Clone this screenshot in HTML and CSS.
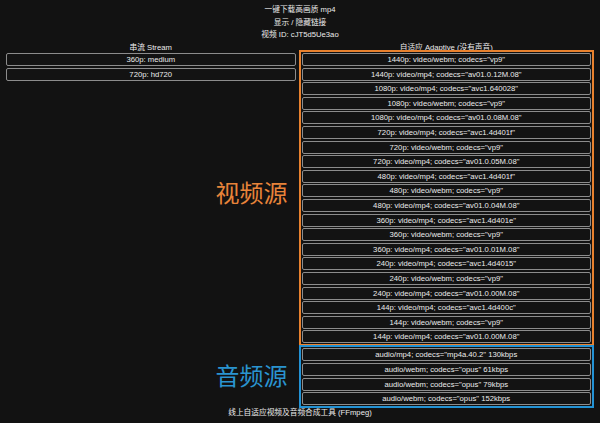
FILE: index.html
```html
<!DOCTYPE html>
<html lang="zh">
<head>
<meta charset="utf-8">
<title>一键下载高画质 mp4</title>
<link rel="stylesheet" href="styles.css">
</head>
<body>
<div class="top">
  <div class="line">一键下载高画质 mp4</div>
  <div class="line">显示 / 隐藏链接</div>
  <div class="line">视频 ID: cJT5d5Ue3ao</div>
</div>
<div class="cols">
  <div class="col">
    <div class="head">串流 Stream</div>
    <div class="btn">360p: medium</div>
    <div class="btn">720p: hd720</div>
  </div>
  <div class="col">
    <div class="head">自适应 Adaptive (没有声音)</div>
    <div class="group video">
      <div class="btn">1440p: video/webm; codecs="vp9"</div>
      <div class="btn">1440p: video/mp4; codecs="av01.0.12M.08"</div>
      <div class="btn">1080p: video/mp4; codecs="avc1.640028"</div>
      <div class="btn">1080p: video/webm; codecs="vp9"</div>
      <div class="btn">1080p: video/mp4; codecs="av01.0.08M.08"</div>
      <div class="btn">720p: video/mp4; codecs="avc1.4d401f"</div>
      <div class="btn">720p: video/webm; codecs="vp9"</div>
      <div class="btn">720p: video/mp4; codecs="av01.0.05M.08"</div>
      <div class="btn">480p: video/mp4; codecs="avc1.4d401f"</div>
      <div class="btn">480p: video/webm; codecs="vp9"</div>
      <div class="btn">480p: video/mp4; codecs="av01.0.04M.08"</div>
      <div class="btn">360p: video/mp4; codecs="avc1.4d401e"</div>
      <div class="btn">360p: video/webm; codecs="vp9"</div>
      <div class="btn">360p: video/mp4; codecs="av01.0.01M.08"</div>
      <div class="btn">240p: video/mp4; codecs="avc1.4d4015"</div>
      <div class="btn">240p: video/webm; codecs="vp9"</div>
      <div class="btn">240p: video/mp4; codecs="av01.0.00M.08"</div>
      <div class="btn">144p: video/mp4; codecs="avc1.4d400c"</div>
      <div class="btn">144p: video/webm; codecs="vp9"</div>
      <div class="btn">144p: video/mp4; codecs="av01.0.00M.08"</div>
      <div class="label label-video">视频源</div>
    </div>
    <div class="group audio">
      <div class="btn">audio/mp4; codecs="mp4a.40.2" 130kbps</div>
      <div class="btn">audio/webm; codecs="opus" 61kbps</div>
      <div class="btn">audio/webm; codecs="opus" 79kbps</div>
      <div class="btn">audio/webm; codecs="opus" 152kbps</div>
      <div class="label label-audio">音频源</div>
    </div>
  </div>
</div>
<div class="foot">线上自适应视频及音频合成工具 (FFmpeg)</div>
</body>
</html>
```
FILE: styles.css
```css
html, body {
  margin: 0;
  padding: 0;
  background: #121212;
  color: #ececec;
  font-family: "Liberation Sans", "Noto Sans CJK SC", sans-serif;
  font-size: 7.7px;
}
body {
  width: 600px;
  height: 423px;
  overflow: hidden;
}
.top {
  padding-top: 4px;
  text-align: center;
}
.line {
  line-height: 12.5px;
}
.cols {
  display: grid;
  grid-template-columns: 1fr 1fr;
  column-gap: 6px;
  padding: 0 9px 0 6px;
}
.col {
  display: flex;
  flex-direction: column;
  gap: 1.6px;
}
.head {
  text-align: center;
  line-height: 11px;
  margin-bottom: -1px;
}
.group {
  position: relative;
  display: flex;
  flex-direction: column;
  gap: 1.6px;
}
.group.video {
  outline: 2px solid #e8812e;
  outline-offset: 1.5px;
}
.group.audio {
  margin-top: 3.5px;
  outline: 2px solid #2392d4;
  outline-offset: 1.5px;
}
.btn {
  height: 11px;
  line-height: 11px;
  border: 1px solid #8c8c8c;
  border-radius: 2px;
  background: #131313;
  text-align: center;
  white-space: nowrap;
}
.label {
  position: absolute;
  left: -86px;
  font-family: "Noto Sans CJK SC", sans-serif;
  font-size: 24px;
  line-height: 28px;
  white-space: nowrap;
}
.label-video {
  top: 125px;
  color: #e8843a;
}
.label-audio {
  top: 13px;
  color: #2a94d0;
}
.foot {
  text-align: center;
  line-height: 11px;
  margin-top: 2px;
}
```
